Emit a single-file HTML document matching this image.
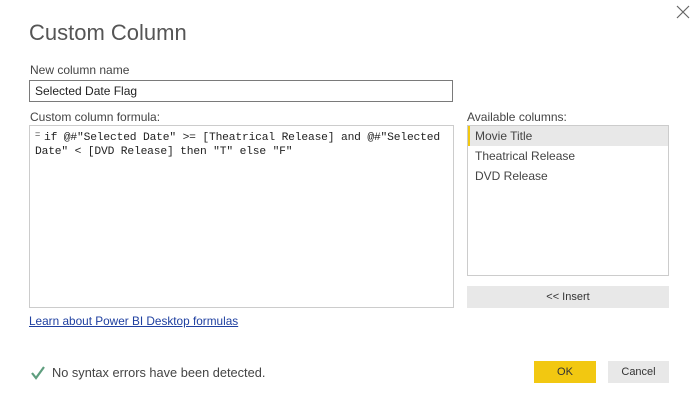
<!DOCTYPE html>
<html><head><style>
body{margin:0;width:699px;height:412px;background:#fff;position:relative;overflow:hidden;font-family:"Segoe UI","Liberation Sans",sans-serif;color:#333}
.a{position:absolute}
.l{font-size:12px;color:#444}
.mono{font-family:"Liberation Mono","DejaVu Sans Mono",monospace;font-size:11.3px;letter-spacing:-0.18px;color:#222;line-height:15px}
</style></head><body>
<svg class="a" style="left:676px;top:5px" width="14" height="14"><path d="M1 1L13 13M13 1L1 13" stroke="#666" stroke-width="1.2"/></svg>
<div class="a" style="left:29px;top:20px;font-size:22px;font-weight:300;color:#555">Custom Column</div>
<div class="a l" style="left:30px;top:63px">New column name</div>
<div class="a" style="left:29px;top:80px;width:422px;height:20px;border:1px solid #7a7a7a"></div>
<div class="a" style="left:35px;top:84px;font-size:12px;color:#222">Selected Date Flag</div>
<div class="a l" style="left:30px;top:110px">Custom column formula:</div>
<div class="a" style="left:29px;top:125px;width:423px;height:181px;border:1px solid #ccc"></div>
<div class="a" style="left:35px;top:129px;font-size:9px;color:#444">=</div>
<div class="a mono" style="left:44px;top:131px">if @#"Selected Date" &gt;= [Theatrical Release] and @#"Selected</div>
<div class="a mono" style="left:35px;top:145px">Date" &lt; [DVD Release] then "T" else "F"</div>
<div class="a l" style="left:467px;top:110px">Available columns:</div>
<div class="a" style="left:467px;top:125px;width:200px;height:149px;border:1px solid #ccc"></div>
<div class="a" style="left:468px;top:126px;width:200px;height:20px;background:#e8e8e8"></div>
<div class="a" style="left:468px;top:126px;width:2px;height:20px;background:#f2c811"></div>
<div class="a" style="left:475px;top:129px;font-size:12px;color:#444">Movie Title</div>
<div class="a" style="left:475px;top:149px;font-size:12px;color:#444">Theatrical Release</div>
<div class="a" style="left:475px;top:169px;font-size:12px;color:#444">DVD Release</div>
<div class="a" style="left:467px;top:286px;width:202px;height:22px;background:#e8e8e8;font-size:11px;color:#333;text-align:center;line-height:22px">&lt;&lt; Insert</div>
<div class="a" style="left:29px;top:314px;font-size:11.8px;color:#1e3fa0;text-decoration:underline">Learn about Power BI Desktop formulas</div>
<svg class="a" style="left:30px;top:366px" width="16" height="14"><path d="M2 7L6 12L14 1" stroke="#5e9e7e" stroke-width="2.2" fill="none"/></svg>
<div class="a" style="left:52px;top:365px;font-size:12.8px;color:#444">No syntax errors have been detected.</div>
<div class="a" style="left:534px;top:361px;width:62px;height:22px;background:#f2c811;font-size:11px;text-align:center;line-height:22px;color:#333">OK</div>
<div class="a" style="left:608px;top:361px;width:61px;height:22px;background:#e8e8e8;font-size:11px;text-align:center;line-height:22px;color:#333">Cancel</div>
</body></html>
